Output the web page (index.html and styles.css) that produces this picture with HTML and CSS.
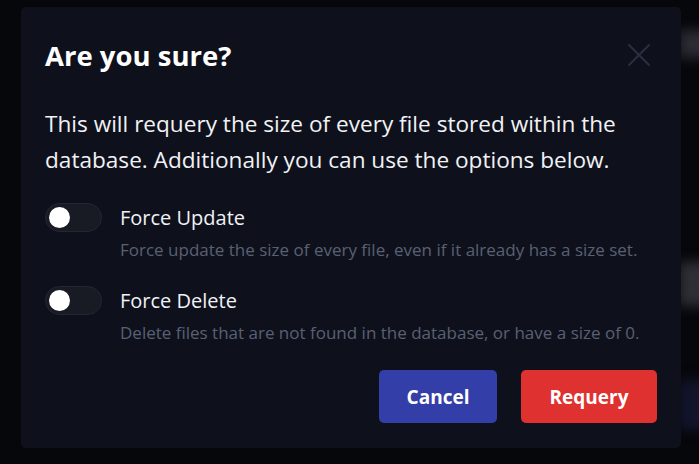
FILE: index.html
```html
<!DOCTYPE html>
<html lang="en">
<head>
    <meta charset="UTF-8">
    <meta name="viewport" content="width=device-width, initial-scale=1.0">
    <title>Requery file sizes</title>
    <link rel="stylesheet" href="styles.css">
</head>
<body>
    <div class="backdrop">
        <div class="blur blur-top"></div>
        <div class="blur blur-mid"></div>
        <div class="blur blur-bottom"></div>
    </div>

    <div class="modal">
        <div class="modal-header">
            <h2>Are you sure?</h2>
            <button class="close-btn" type="button" aria-label="Close">
                <svg width="22" height="22" viewBox="0 0 22 22">
                    <path d="M1 1 L21 21 M21 1 L1 21" stroke="currentColor" stroke-width="2" stroke-linecap="round"/>
                </svg>
            </button>
        </div>

        <p class="intro">This will requery the size of every file stored within the database. Additionally you can use the options below.</p>

        <div class="option">
            <label class="switch">
                <input type="checkbox" id="forceUpdate">
                <span class="track"></span>
            </label>
            <div class="option-text">
                <label for="forceUpdate" class="option-title">Force Update</label>
                <div class="option-desc">Force update the size of every file, even if it already has a size set.</div>
            </div>
        </div>

        <div class="option">
            <label class="switch">
                <input type="checkbox" id="forceDelete">
                <span class="track"></span>
            </label>
            <div class="option-text">
                <label for="forceDelete" class="option-title">Force Delete</label>
                <div class="option-desc">Delete files that are not found in the database, or have a size of 0.</div>
            </div>
        </div>

        <div class="actions">
            <button type="button" class="btn btn-cancel">Cancel</button>
            <button type="button" class="btn btn-danger">Requery</button>
        </div>
    </div>
</body>
</html>
```

FILE: styles.css
```css
body {
    font-family: "Open Sans", "Noto Sans", sans-serif;
    background-color: #06070b;
    color: #f1f2f5;
    margin: 0;
    height: 464px;
    overflow: hidden;
    position: relative;
}
.backdrop {
    position: absolute;
    inset: 0;
}
.blur {
    position: absolute;
    right: -20px;
    width: 40px;
    filter: blur(6px);
}
.blur-top {
    top: 30px;
    height: 28px;
    background-color: #2a2b33;
}
.blur-mid {
    top: 262px;
    height: 44px;
    background-color: #2e2f36;
}
.blur-bottom {
    top: 380px;
    height: 50px;
    background-color: #12142c;
}
.modal {
    position: relative;
    margin: 7px 0 0 21px;
    width: 660px;
    height: 441px;
    box-sizing: border-box;
    padding: 31px 24px 25px 24px;
    background-color: #0e111c;
    border-radius: 5px;
    display: flex;
    flex-direction: column;
}
.modal-header {
    display: flex;
    justify-content: space-between;
    align-items: flex-start;
}
h2 {
    margin: 0;
    font-size: 27.5px;
    font-weight: 700;
    line-height: 36px;
    color: #fff;
}
.close-btn {
    background: none;
    border: none;
    padding: 0;
    margin: 6px 7px 0 0;
    color: #2a2f3f;
    cursor: pointer;
    display: flex;
}
.intro {
    margin: 32px 0 0 0;
    font-size: 22.6px;
    line-height: 36px;
}
.option {
    display: flex;
    gap: 18px;
    margin-top: 25px;
}
.option + .option {
    margin-top: 24px;
}
.switch {
    position: relative;
    flex-shrink: 0;
    width: 57px;
    height: 29px;
}
.switch input {
    display: none;
}
.track {
    position: absolute;
    inset: 0;
    background-color: #181a24;
    border: 1px solid #232634;
    border-radius: 15px;
    box-sizing: border-box;
}
.track::after {
    content: "";
    position: absolute;
    top: 3px;
    left: 3px;
    width: 21px;
    height: 21px;
    border-radius: 50%;
    background-color: #fff;
}
.option-text {
    padding-top: 1px;
}
.option-title {
    display: block;
    font-size: 20px;
    line-height: 28px;
    color: #f1f2f5;
}
.option-desc {
    font-size: 17px;
    line-height: 24px;
    color: #5a6073;
    margin-top: 6px;
}
.actions {
    margin-top: auto;
    display: flex;
    justify-content: flex-end;
    gap: 24px;
}
.btn {
    height: 53px;
    border: none;
    border-radius: 5px;
    color: #fff;
    font-family: inherit;
    font-size: 19px;
    font-weight: 700;
    cursor: pointer;
}
.btn-cancel {
    width: 118px;
    background-color: #343ea8;
}
.btn-danger {
    width: 136px;
    background-color: #e03131;
}
```
